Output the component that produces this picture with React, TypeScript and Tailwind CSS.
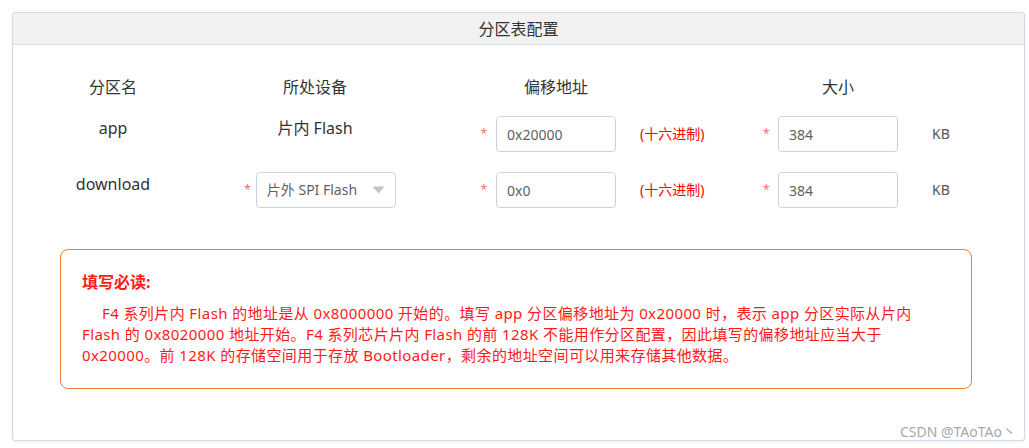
import { useState } from "react";

const FONT = "font-['Noto_Sans','Noto_Sans_CJK_SC',sans-serif]";

function Star() {
  return <span className="text-[12px] leading-none text-[#f56c6c]">*</span>;
}

function TextInput({ value }: { value: string }) {
  return (
    <input
      defaultValue={value}
      className="h-9 w-[120px] rounded border border-[#c9d3df] bg-white px-[10px] text-sm text-[#606266] outline-none"
    />
  );
}

function DeviceSelect() {
  return (
    <div className="flex h-9 w-[140px] items-center justify-between rounded border border-[#c9d3df] bg-white pl-[10px] pr-[10px] text-sm text-[#606266]">
      <span>片外 SPI Flash</span>
      <svg width="13" height="8" viewBox="0 0 13 8">
        <path d="M0.5 0.5 L12.5 0.5 L6.5 7.5 Z" fill="#c0c4cc" />
      </svg>
    </div>
  );
}

type Row = { name: string; device: string | null; offset: string; size: string };

export default function App() {
  const [rows] = useState<Row[]>([
    { name: "app", device: "片内 Flash", offset: "0x20000", size: "384" },
    { name: "download", device: null, offset: "0x0", size: "384" },
  ]);

  return (
    <div className={`${FONT} relative h-[448px] w-[1029px] bg-white pl-3 pt-3`}>
      <div className="h-[429px] w-[1013px] overflow-hidden rounded-[3px] border border-[#cfdbe9] bg-white shadow-[0_1px_3px_rgba(0,0,0,0.08)]">
        <div className="flex h-8 items-center justify-center border-b border-[#cfdbe9] bg-[#f2f2f2] text-base text-[#333]">
          分区表配置
        </div>

        <div className="pt-[30px]">
          {/* header row */}
          <div className="flex text-base leading-6 text-[#333]">
            <div className="ml-[50px] w-[100px] text-center">分区名</div>
            <div className="w-[304px] text-center">所处设备</div>
            <div className="w-[29px]" />
            <div className="w-[120px] text-center">偏移地址</div>
            <div className="w-[162px]" />
            <div className="w-[120px] text-center">大小</div>
          </div>

          <div className="mt-[17px] flex flex-col gap-5">
            {rows.map((r) => (
              <div key={r.name} className="flex items-start">
                <div className="ml-[50px] w-[100px] text-center text-base leading-6 text-[#333]">
                  {r.name}
                </div>
                <div className="flex w-[304px] justify-center">
                  {r.device ? (
                    <span className="text-base leading-6 text-[#333]">{r.device}</span>
                  ) : (
                    <div className="ml-[10px] flex h-9 items-center gap-[5px]">
                      <Star />
                      <DeviceSelect />
                    </div>
                  )}
                </div>
                <div className="flex h-9 w-[29px] items-center justify-end pr-[9px]">
                  <Star />
                </div>
                <TextInput value={r.offset} />
                <div className="flex h-9 w-[147px] items-center pl-6 text-sm text-[#ff0000]">
                  (十六进制)
                </div>
                <div className="flex h-9 w-[15px] items-center">
                  <Star />
                </div>
                <TextInput value={r.size} />
                <div className="flex h-9 items-center pl-[34px] text-sm text-[#555]">KB</div>
              </div>
            ))}
          </div>

          <div className="ml-[47px] mt-[41px] w-[912px] rounded-lg border border-[#ee7f3a] px-[21px] pb-[22px] pt-5 text-[#ff1a1a]">
            <div className="text-base font-bold leading-6">填写必读:</div>
            <p className="mt-[9px] whitespace-nowrap indent-[20px] text-[15px] leading-[21px] tracking-[0.4px]">
              F4 系列片内 Flash 的地址是从 0x8000000 开始的。填写 app 分区偏移地址为 0x20000 时，表示 app 分区实际从片内
              <br />
              Flash 的 0x8020000 地址开始。F4 系列芯片片内 Flash 的前 128K 不能用作分区配置，因此填写的偏移地址应当大于
              <br />
              0x20000。前 128K 的存储空间用于存放 Bootloader，剩余的地址空间可以用来存储其他数据。
            </p>
          </div>
        </div>
      </div>

      <div className="absolute right-[13px] top-[424px] text-sm leading-4 text-[#a8a8a8]">
        CSDN @TAoTAo丶
      </div>
    </div>
  );
}
